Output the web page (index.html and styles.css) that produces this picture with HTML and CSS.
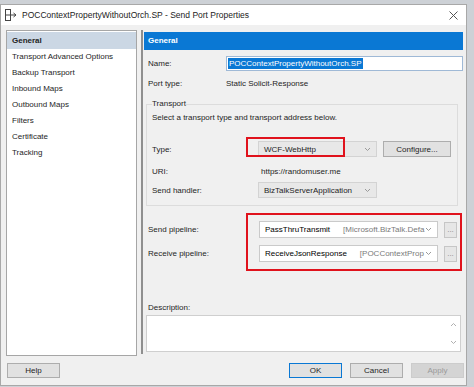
FILE: index.html
```html
<!DOCTYPE html>
<html lang="en">
<head>
    <meta charset="UTF-8">
    <title>Send Port Properties</title>
    <link rel="stylesheet" href="styles.css">
</head>
<body>
    <div class="window">
        <div class="titlebar">
            <svg class="app-icon" width="12" height="12" viewBox="0 0 12 12">
                <rect x="0.5" y="0.5" width="5" height="11" fill="none" stroke="#444"/>
                <line x1="0.5" y1="6" x2="5.5" y2="6" stroke="#444"/>
                <line x1="5.5" y1="6" x2="11" y2="6" stroke="#444"/>
                <polyline points="8.5,4 11,6 8.5,8" fill="none" stroke="#444"/>
            </svg>
            <span class="title">POCContextPropertyWithoutOrch.SP - Send Port Properties</span>
            <svg class="close" width="9" height="9" viewBox="0 0 9 9">
                <line x1="0.5" y1="0.5" x2="8.5" y2="8.5" stroke="#555"/>
                <line x1="8.5" y1="0.5" x2="0.5" y2="8.5" stroke="#555"/>
            </svg>
        </div>

        <div class="content">
            <div class="main">
                <ul class="nav">
                    <li class="active">General</li>
                    <li>Transport Advanced Options</li>
                    <li>Backup Transport</li>
                    <li>Inbound Maps</li>
                    <li>Outbound Maps</li>
                    <li>Filters</li>
                    <li>Certificate</li>
                    <li>Tracking</li>
                </ul>

                <div class="panel">
                    <div class="panel-head">General</div>
                    <div class="form">
                        <div class="row name-row">
                            <span class="label">Name:</span>
                            <div class="textbox"><span class="selected">POCContextPropertyWithoutOrch.SP</span></div>
                        </div>
                        <div class="row info-row">
                            <span class="label">Port type:</span>
                            <span>Static Solicit-Response</span>
                        </div>

                        <fieldset class="group">
                            <legend>Transport</legend>
                            <p class="hint">Select a transport type and transport address below.</p>
                            <div class="row type-row">
                                <span class="label group-label">Type:</span>
                                <div class="combo-wrap">
                                    <div class="combo flat">
                                        <span>WCF-WebHttp</span>
                                        <svg class="arrow" width="5" height="3" viewBox="0 0 5 3"><polyline points="0,0 2.5,2.5 5,0" fill="none" stroke="#9a9a9a"/></svg>
                                    </div>
                                    <div class="mark type-mark"></div>
                                </div>
                                <button class="btn configure">Configure...</button>
                            </div>
                            <div class="row uri-row">
                                <span class="label group-label">URI:</span>
                                <span class="uri">https://randomuser.me</span>
                            </div>
                            <div class="row handler-row">
                                <span class="label group-label">Send handler:</span>
                                <div class="combo flat">
                                    <span>BizTalkServerApplication</span>
                                    <svg class="arrow" width="5" height="3" viewBox="0 0 5 3"><polyline points="0,0 2.5,2.5 5,0" fill="none" stroke="#9a9a9a"/></svg>
                                </div>
                            </div>
                        </fieldset>

                        <div class="pipelines">
                            <div class="row pipe-row">
                                <span class="label pipe-label">Send pipeline:</span>
                                <div class="combo pipe">
                                    <span class="pipe-name">PassThruTransmit</span>
                                    <span class="pipe-asm">[Microsoft.BizTalk.Defa</span>
                                    <svg class="arrow" width="5" height="3" viewBox="0 0 5 3"><polyline points="0,0 2.5,2.5 5,0" fill="none" stroke="#9a9a9a"/></svg>
                                </div>
                                <button class="btn dots">...</button>
                            </div>
                            <div class="row pipe-row">
                                <span class="label pipe-label">Receive pipeline:</span>
                                <div class="combo pipe">
                                    <span class="pipe-name">ReceiveJsonResponse</span>
                                    <span class="pipe-asm">[POCContextProp</span>
                                    <svg class="arrow" width="5" height="3" viewBox="0 0 5 3"><polyline points="0,0 2.5,2.5 5,0" fill="none" stroke="#9a9a9a"/></svg>
                                </div>
                                <button class="btn dots">...</button>
                            </div>
                            <div class="mark pipe-mark"></div>
                        </div>

                        <div class="desc-label">Description:</div>
                        <div class="textarea">
                            <div class="scroll">
                                <svg width="5" height="3" viewBox="0 0 5 3"><polyline points="0,3 2.5,0.5 5,3" fill="none" stroke="#b0b0b0"/></svg>
                                <svg width="5" height="3" viewBox="0 0 5 3"><polyline points="0,0 2.5,2.5 5,0" fill="none" stroke="#b0b0b0"/></svg>
                            </div>
                        </div>
                    </div>
                </div>
            </div>

            <div class="buttons">
                <button class="btn help">Help</button>
                <div class="spacer"></div>
                <button class="btn ok">OK</button>
                <button class="btn">Cancel</button>
                <button class="btn disabled">Apply</button>
            </div>
        </div>
    </div>
</body>
</html>
```

FILE: styles.css
```css
body {
    margin: 0;
    background-color: #cdd1d6;
    font-family: "Liberation Sans", Arial, sans-serif;
    font-size: 8px;
    color: #1e1e1e;
}
.window {
    width: 467px;
    height: 382px;
    margin-top: 4px;
    box-sizing: border-box;
    border: 1px solid #a8a8a8;
    background-color: #f0f0f0;
}
.titlebar {
    height: 20px;
    box-sizing: border-box;
    background: #fff;
    display: flex;
    align-items: center;
    padding: 0 8px 0 4px;
    font-size: 8.5px;
}
.app-icon {
    margin-right: 5px;
}
.title {
    flex: 1;
    color: #222;
}
.content {
    padding: 5px 2px 0 5px;
}
.main {
    display: flex;
    height: 326px;
}
.nav {
    list-style: none;
    margin: 0;
    padding: 1px 0 0 0;
    width: 131px;
    box-sizing: border-box;
    background: #fff;
    border: 1px solid #a6a6a6;
}
.nav li {
    height: 16px;
    line-height: 16px;
    padding-left: 5px;
}
.nav li.active {
    height: 17px;
    line-height: 17px;
    background-color: #cbd7e4;
    font-weight: bold;
}
.panel {
    flex: 1;
    margin-left: 4px;
    border-left: 2px solid #8f8f8f;
    height: 324px;
}
.panel-head {
    margin: 2px 1px 0 1px;
    height: 18px;
    line-height: 18px;
    background-color: #0a78d4;
    color: #fff;
    font-weight: bold;
    padding-left: 4px;
}
.form {
    padding-left: 5px;
}
.row {
    display: flex;
    align-items: center;
}
.label {
    flex: none;
}
.name-row {
    margin-top: 6px;
}
.name-row .label {
    width: 78px;
}
.textbox {
    width: 237px;
    height: 15px;
    box-sizing: border-box;
    border: 1px solid #9fb9d6;
    background: #fff;
    display: flex;
    align-items: center;
    padding-left: 1px;
}
.selected {
    background-color: #0a78d4;
    color: #fff;
    padding: 0 1px;
    line-height: 11px;
}
.info-row {
    margin-top: 5px;
    height: 14px;
}
.info-row .label {
    width: 78px;
}
.group {
    margin: 9px 6px 0 -2px;
    padding: 0 5px 7px 5px;
    border: 1px solid #dcdcdc;
}
.group legend {
    padding: 0;
    line-height: 10px;
}
.hint {
    margin: 4px 0 0 0;
    line-height: 10px;
}
.group-label {
    width: 106px;
}
.type-row {
    margin-top: 18px;
}
.combo-wrap {
    position: relative;
}
.combo {
    display: flex;
    align-items: center;
    box-sizing: border-box;
    height: 16px;
    padding-left: 5px;
    border: 1px solid #d3d3d3;
}
.combo span {
    flex: none;
}
.combo .arrow {
    margin-left: auto;
    margin-right: 6px;
}
.flat {
    width: 119px;
    background-color: #e8e8e8;
}
.btn {
    font-family: inherit;
    font-size: 8px;
    color: #1e1e1e;
    height: 16px;
    padding: 0;
    box-sizing: border-box;
    background-color: #e1e1e1;
    border: 1px solid #adadad;
}
.configure {
    width: 68px;
    margin-left: 6px;
}
.uri-row {
    margin-top: 7px;
    height: 14px;
}
.uri {
    padding-left: 3px;
}
.handler-row {
    margin-top: 4px;
}
.pipelines {
    position: relative;
    margin-top: 15px;
}
.pipe-row + .pipe-row {
    margin-top: 7px;
}
.pipe-label {
    width: 111px;
}
.pipe {
    width: 179px;
    height: 17px;
    background: #fff;
    border-color: #cacaca;
}
.pipe-name {
    margin-right: 13px;
    color: #000;
}
.pipe-asm {
    color: #7a7a7a;
}
.dots {
    width: 13px;
    height: 16px;
    margin-left: 6px;
    line-height: 8px;
    color: #888;
    background-color: #e6e6e6;
    border-color: #c6c6c6;
}
.mark {
    position: absolute;
    box-sizing: border-box;
    border: 2px solid #e0121c;
}
.type-mark {
    left: -12px;
    top: -4px;
    width: 99px;
    height: 20px;
}
.pipe-mark {
    left: 98px;
    top: -8px;
    width: 216px;
    height: 58px;
}
.desc-label {
    margin-top: 41px;
    line-height: 10px;
}
.textarea {
    margin: 2px 0 0 -2px;
    width: 315px;
    height: 37px;
    box-sizing: border-box;
    border: 1px solid #cfcfcf;
    background: #fff;
    display: flex;
    justify-content: flex-end;
}
.scroll {
    width: 13px;
    display: flex;
    flex-direction: column;
    justify-content: space-between;
    align-items: center;
    padding: 7px 0 7px 0;
}
.buttons {
    display: flex;
    margin-top: 7px;
}
.buttons .btn {
    width: 53px;
    height: 15px;
    margin-left: 8px;
}
.buttons .help {
    margin-left: 1px;
}
.spacer {
    flex: 1;
}
.buttons .ok {
    border-color: #0a78d4;
}
.buttons .disabled {
    background-color: #d4d4d4;
    border-color: #cccccc;
    color: #9a9a9a;
}
```
